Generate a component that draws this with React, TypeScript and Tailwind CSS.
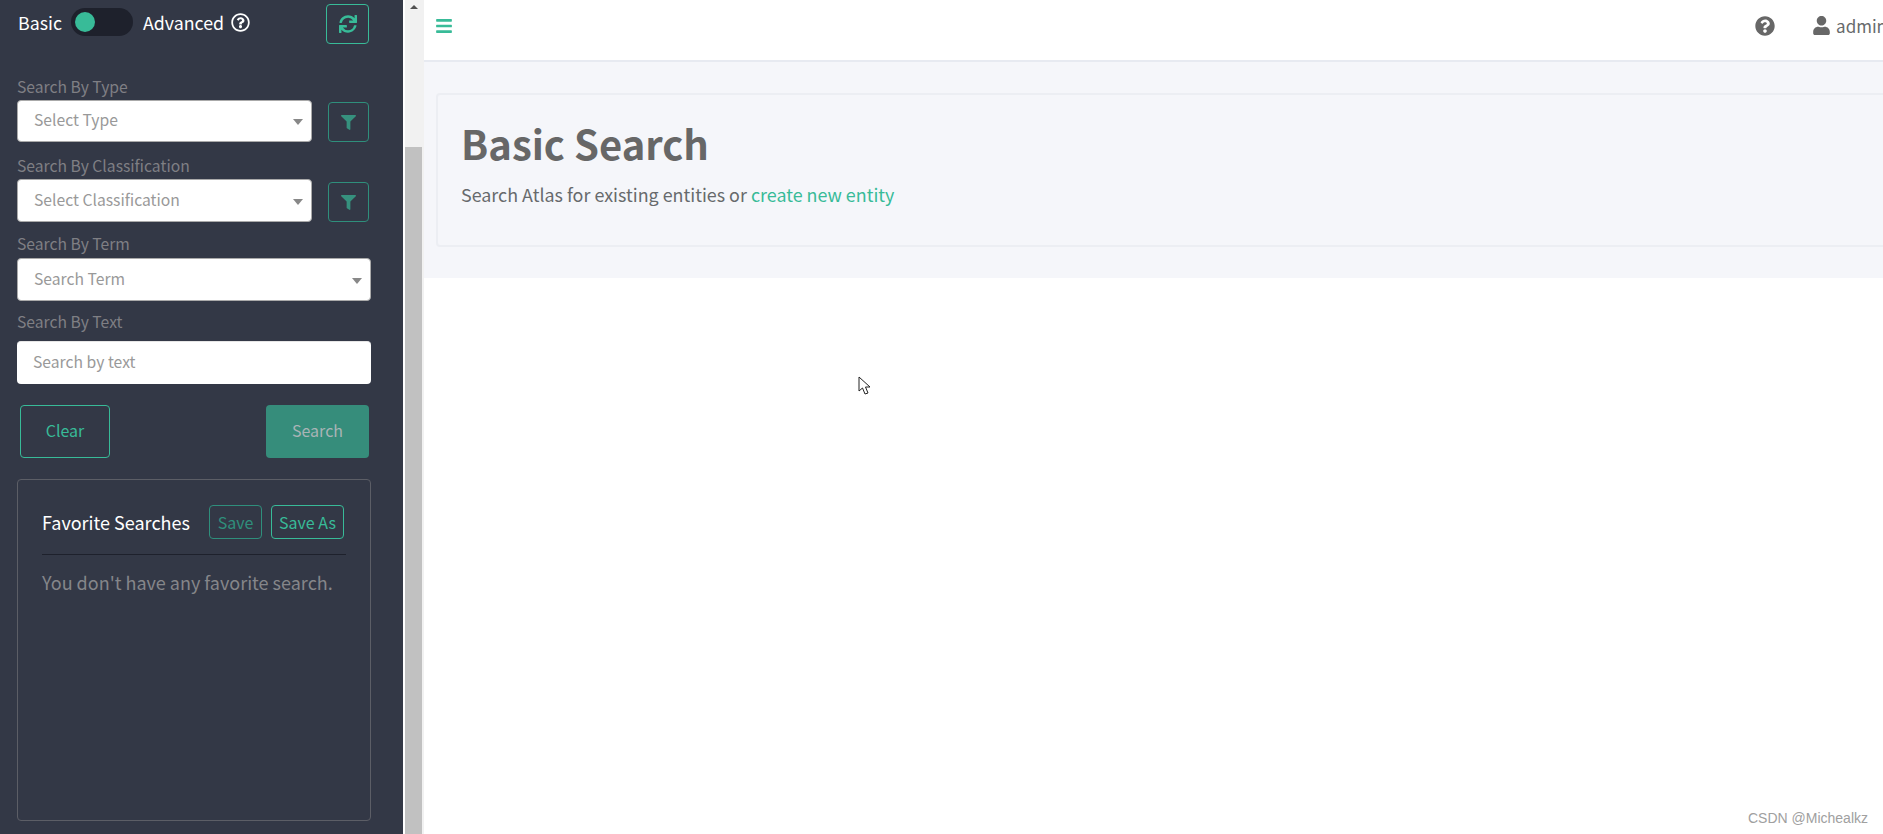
import { FaBars, FaFilter, FaQuestionCircle, FaRegQuestionCircle, FaSync, FaUser } from "react-icons/fa";

function FieldLabel({ text, className }: { text: string; className: string }) {
  return <div className={`text-[15.7px] leading-[22px] text-[#7f7f84] ${className}`}>{text}</div>;
}

function SelectBox({ text, className }: { text: string; className: string }) {
  return (
    <div className={`flex items-center justify-between bg-white rounded-[4px] border border-[#aaaaaa] pl-4 pr-[8px] text-[15.7px] text-[#999999] ${className}`}>
      <span className="-translate-y-px">{text}</span>
      <span className="translate-y-px w-0 h-0 border-x-[5px] border-x-transparent border-t-[6px] border-t-[#888888]" />
    </div>
  );
}

function FilterButton() {
  return (
    <button className="w-[41px] h-[40px] flex items-center justify-center rounded-[4px] border border-[#2f8f7c] text-[#36917e]">
      <FaFilter size={15} />
    </button>
  );
}

export default function App() {
  return (
    <div className="relative flex h-screen w-full overflow-hidden bg-white font-['Noto_Sans_CJK_SC','Source_Sans_Pro',sans-serif]">
      <aside className="w-[403px] shrink-0 h-full bg-[#333846] pl-[17px] pr-[32px]">
        <div className="flex items-start pt-1 h-[100px]">
          <div className="flex items-center h-[36px] text-[17.8px] text-white">
            <span className="ml-px">Basic</span>
            <span className="ml-[9px] w-[62px] h-[28px] rounded-full bg-[#1e212c] flex items-center pl-[4px]">
              <span className="w-5 h-5 rounded-full bg-[#38bb98]" />
            </span>
            <span className="ml-[10px]">Advanced</span>
            <FaRegQuestionCircle size={19} className="ml-[7px]" />
          </div>
          <button className="ml-auto mr-[2px] w-[43px] h-[40px] flex items-center justify-center rounded-[4px] border border-[#38bb98] text-[#38bb98]">
            <FaSync size={18} />
          </button>
        </div>

        <div className="w-[354px]">
          <FieldLabel text="Search By Type" className="-mt-[24px] mb-[2px]" />
          <div className="flex items-end justify-between pr-[2px] h-[42px]">
            <SelectBox text="Select Type" className="w-[295px] h-[42px]" />
            <FilterButton />
          </div>
          <FieldLabel text="Search By Classification" className="mt-[13px] mb-[2px]" />
          <div className="flex items-end justify-between pr-[2px] h-[43px]">
            <SelectBox text="Select Classification" className="w-[295px] h-[43px]" />
            <FilterButton />
          </div>
          <FieldLabel text="Search By Term" className="mt-[11px] mb-[3px]" />
          <SelectBox text="Search Term" className="w-full h-[43px]" />
          <FieldLabel text="Search By Text" className="mt-[10px] mb-[8px]" />
          <div className="w-full h-[43px] flex items-center bg-white rounded-[4px] pl-4 pb-[2px] text-[15.7px] text-[#999999] border-t border-[#e6e6e6]">
            Search by text
          </div>

          <div className="flex justify-between pl-[3px] pr-[2px] mt-[21px]">
            <button className="w-[90px] h-[53px] pb-[4px] rounded-[4px] border border-[#38bb98] text-[16px] text-[#38bb98]">Clear</button>
            <button className="w-[103px] h-[53px] pb-[4px] rounded-[4px] bg-[#368d7b] text-[16px] text-[#a9b4b6]">Search</button>
          </div>

          <div className="mt-[21px] h-[342px] rounded-[4px] border border-[#5c5e66] pl-[24px] pr-[24px] pt-[25px]">
            <div className="flex items-center h-[34px]">
              <span className="text-[18px] text-white">Favorite Searches</span>
              <button className="ml-auto w-[53px] h-[34px] pb-px rounded-[4px] border border-[#2f8f7c] text-[16px] text-[#2f8f7c]">Save</button>
              <button className="ml-[9px] mr-[2px] w-[73px] h-[34px] pb-px rounded-[4px] border border-[#38bb98] text-[16px] text-[#38bb98]">Save As</button>
            </div>
            <div className="mt-[15px] h-px bg-[#1e212c]" />
            <p className="mt-[13px] text-[18px] leading-[28px] text-[#85868a]">You don't have any favorite search.</p>
          </div>
        </div>
      </aside>

      <div className="w-[2px] shrink-0 bg-white" />
      <div className="relative w-[17px] shrink-0 h-full bg-[#f1f1f1] flex flex-col">
        <div className="h-[147px] flex justify-center pt-[5px]">
          <span className="w-0 h-0 border-x-[4px] border-x-transparent border-b-[4px] border-b-[#505050]" />
        </div>
        <div className="flex-1 bg-[#c1c1c1]" />
      </div>
      <div className="w-[2px] shrink-0 bg-[#f1f1f1]" />

      <main className="flex-1 min-w-0 overflow-hidden">
        <header className="w-[1463px] h-[62px] bg-white border-b-2 border-[#e7eaf1] flex items-start">
          <FaBars size={18} className="ml-[11px] mt-[17px] text-[#38bb98]" />
          <FaQuestionCircle size={20} className="ml-auto mt-[16px] text-[#676767]" />
          <FaUser size={19} className="ml-[37px] mt-[16px] text-[#676767]" />
          <span className="ml-[5px] mt-[13px] text-[17px] leading-[26px] text-[#676a6c]">admin</span>
        </header>
        <section className="w-[1480px] h-[216px] bg-[#f5f6fa] pl-[12px] pt-[31px]">
          <div className="h-[154px] rounded-[4px] border-2 border-[#eceef3] pl-[24px] pt-[20px]">
            <h1 className="-ml-px text-[40px] leading-[56px] font-bold text-[#676767]">Basic Search</h1>
            <p className="mt-[9px] -ml-px text-[17.9px] leading-[28px] text-[#676a6c]">
              Search Atlas for existing entities or <a className="text-[#38bb98]">create new entity</a>
            </p>
          </div>
        </section>
      </main>

      <svg className="absolute left-[858px] top-[376px]" width="14" height="20" viewBox="0 0 14 20" fill="white" stroke="#222222">
        <path d="M1 1 L1 15 L4.5 12 L7 18 L10 17 L7.5 11 L12 11 Z" />
      </svg>
      <span className="absolute right-[15px] bottom-[8px] font-['Liberation_Sans',sans-serif] text-[14px] leading-[16px] text-[#a0a0a0]">CSDN @Michealkz</span>
    </div>
  );
}
